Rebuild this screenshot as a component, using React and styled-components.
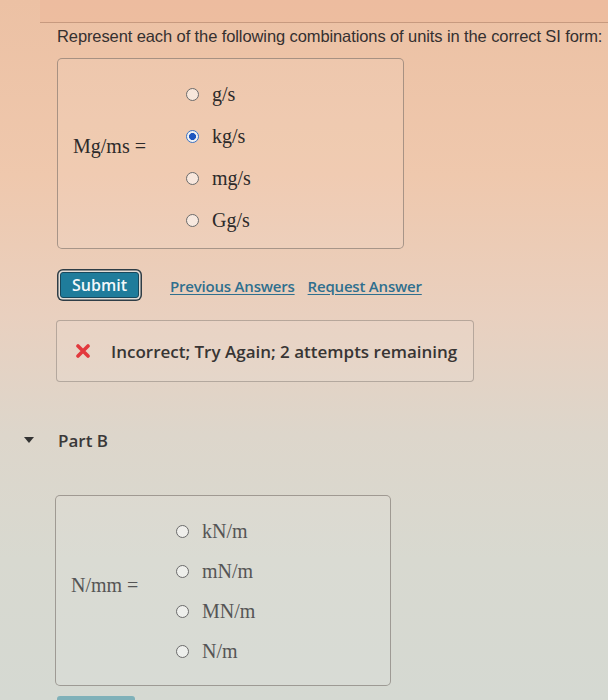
import React from 'react';
import styled, { createGlobalStyle } from 'styled-components';

const Global = createGlobalStyle`
    html, body {
        margin : 0;
        padding : 0;
    }
    body {
        width : 608px;
        height : 700px;
        overflow : hidden;
        font-family : "Liberation Sans", Arial, sans-serif;
        color : #333;
        background : linear-gradient(180deg, #ecc1a4 0%, #efc8ad 25%, #e9d0bf 45%, #ddd6cb 62%, #d8d9d0 80%, #d5d9d2 100%);
    }
`

const Page = styled('div')`
    width : 608px;
    height : 700px;
    overflow : hidden;
`

const TopRule = styled('div')`
    height : 22px;
    margin-left : 40px;
    border-bottom : 1px solid rgba(130, 90, 70, 0.35);
    background : rgba(240, 175, 145, 0.25);
`

const Prompt = styled('p')`
    margin : 4px 0 0 57px;
    font-size : 16.5px;
    line-height : 19px;
    letter-spacing : -0.1px;
    white-space : nowrap;
    color : #353030;
`

const Card = styled('div')`
    box-sizing : border-box;
    display : flex;
    width : ${p => p.w}px;
    height : 191px;
    margin : ${p => p.top}px 0 0 ${p => p.left}px;
    padding-left : 15px;
    border : 1px solid rgba(110, 100, 95, 0.55);
    border-radius : 5px;
    background : rgba(255, 255, 255, 0.07);
`

const Expr = styled('div')`
    width : ${p => p.w}px;
    align-self : center;
    padding-bottom : ${p => p.shift}px;
    font-family : "Liberation Serif", "Times New Roman", serif;
    font-size : 20px;
    color : ${p => p.faint ? '#555' : '#2c2a2a'};
    white-space : nowrap;
`

const Options = styled('div')`
    display : flex;
    flex-direction : column;
    padding-top : ${p => p.top}px;
`

const Option = styled('label')`
    display : flex;
    align-items : center;
    gap : ${p => p.gap}px;
    height : ${p => p.h}px;
    font-family : "Liberation Serif", "Times New Roman", serif;
    font-size : 20px;
    color : ${p => p.faint ? '#555' : '#2c2a2a'};
`

const Radio = styled('span')`
    box-sizing : border-box;
    width : 13px;
    height : 13px;
    border-radius : 50%;
    border : 1.5px solid ${p => p.checked ? '#3a73c4' : '#6b6b6b'};
    background : ${p => p.checked
        ? 'radial-gradient(circle, #1f57c0 0 3.2px, #f2f2f2 3.8px)'
        : 'rgba(255,255,255,0.55)'};
`

const Actions = styled('div')`
    display : flex;
    align-items : center;
    margin : 23px 0 0 60px;
`

const SubmitButton = styled('button')`
    height : 26px;
    padding : 0 11px;
    border : 1px solid #18485c;
    border-radius : 3px;
    background : #1f7c9b;
    color : #f4f8fa;
    font-family : "Open Sans", "Liberation Sans", sans-serif;
    font-size : 16px;
    font-weight : 600;
    line-height : 1;
    box-shadow : 0 0 0 1.5px #e4ddd6, 0 0 0 3px #2f3d46;
`

const Links = styled('div')`
    display : flex;
    gap : 13px;
    margin-left : 31px;
    padding-top : 2px;
`

const Link = styled('a')`
    font-family : "Open Sans", "Liberation Sans", sans-serif;
    font-size : 15px;
    font-weight : 600;
    letter-spacing : -0.2px;
    color : #2f6f8e;
    text-decoration : underline;
    text-underline-offset : 2px;
`

const Feedback = styled('div')`
    box-sizing : border-box;
    display : flex;
    align-items : center;
    width : 418px;
    height : 62px;
    margin : 22px 0 0 56px;
    padding-left : 19px;
    border : 1px solid rgba(120, 110, 105, 0.45);
    border-radius : 4px;
    background : rgba(255, 255, 255, 0.08);
`

const Message = styled('span')`
    margin-left : 21px;
    font-family : "Open Sans", "Liberation Sans", sans-serif;
    font-size : 17px;
    font-weight : 600;
    color : #383534;
    white-space : nowrap;
`

const PartHeader = styled('div')`
    display : flex;
    align-items : center;
    height : 20px;
    margin : 48px 0 0 24px;
    font-family : "Open Sans", "Liberation Sans", sans-serif;
    font-size : 17px;
    font-weight : 600;
    color : #3a3838;
`

const Caret = styled('span')`
    width : 0;
    height : 0;
    border-left : 5px solid transparent;
    border-right : 5px solid transparent;
    border-top : 6px solid #333;
    margin-right : 24px;
`

const NextButton = styled('div')`
    width : 78px;
    height : 20px;
    margin : 10px 0 0 57px;
    border-radius : 3px;
    background : #7fb1b9;
`

const partA = ['g/s', 'kg/s', 'mg/s', 'Gg/s'];
const partB = ['kN/m', 'mN/m', 'MN/m', 'N/m'];

const Cross = () => (
    <svg width="14" height="14" viewBox="0 0 14 14">
        <path d="M2 2 L12 12 M12 2 L2 12" stroke="#e2393d" strokeWidth="3.6" strokeLinecap="round" />
    </svg>
)

export default function App(){
    return(
        <Page>
            <Global />
            <TopRule />
            <Prompt>Represent each of the following combinations of units in the correct SI form:</Prompt>

            <Card w={347} top={12} left={57}>
                <Expr w={113} shift={14}>Mg/ms =</Expr>
                <Options top={14}>
                    {partA.map((u, i) => (
                        <Option key={u} h={42} gap={13}>
                            <Radio checked={i === 1} />
                            {u}
                        </Option>
                    ))}
                </Options>
            </Card>

            <Actions>
                <SubmitButton>Submit</SubmitButton>
                <Links>
                    <Link>Previous Answers</Link>
                    <Link>Request Answer</Link>
                </Links>
            </Actions>

            <Feedback>
                <Cross />
                <Message>Incorrect; Try Again; 2 attempts remaining</Message>
            </Feedback>

            <PartHeader>
                <Caret />
                Part B
            </PartHeader>

            <Card w={336} top={45} left={55}>
                <Expr w={105} shift={10} faint>N/mm =</Expr>
                <Options top={15}>
                    {partB.map(u => (
                        <Option key={u} h={40} gap={13} faint>
                            <Radio />
                            {u}
                        </Option>
                    ))}
                </Options>
            </Card>

            <NextButton />
        </Page>
    )
}
